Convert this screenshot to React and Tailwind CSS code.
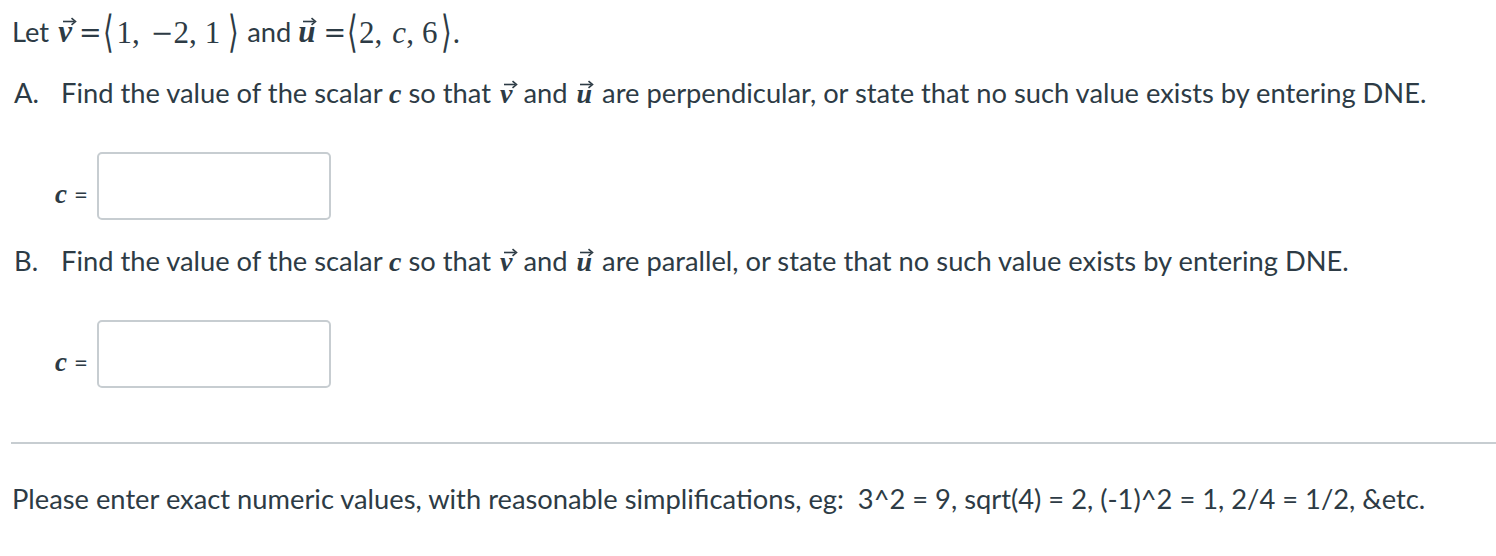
import React from "react";

function Vec({ ch, big }) {
  return (
    <span
      className={`relative inline-block leading-none font-bold italic font-['Liberation_Serif',serif] ${
        big ? "text-[31px]" : "text-[28px]"
      }`}
    >
      {ch}
      <svg
        className={`absolute ${big ? "left-[4px] top-[1px]" : "left-[3px] top-[0px]"}`}
        width="15"
        height="9"
        viewBox="0 0 15 9"
      >
        <path d="M1 4.5 H12.5" stroke="#2d3b45" strokeWidth="1.6" fill="none" />
        <path d="M9.5 1.2 L13.5 4.5 L9.5 7.8" stroke="#2d3b45" strokeWidth="1.6" fill="none" />
      </svg>
    </span>
  );
}

function Ang({ ch }) {
  return (
    <span className="inline-block scale-y-[1.45] scale-x-[0.9] text-[30px] leading-none font-['DejaVu_Sans',serif] font-extralight">
      {ch}
    </span>
  );
}

function C() {
  return <span className="font-bold italic text-[28px] font-['Liberation_Serif',serif]">c</span>;
}

function Answer({ top }) {
  return (
    <div className={`flex items-center pl-[55px] ${top}`}>
      <span className="flex items-center gap-[7px] mr-[9px] pt-[16px]">
        <span className="font-bold italic text-[27px] leading-none font-['Liberation_Serif',serif]">c</span>
        <span className="text-[24px] leading-none">=</span>
      </span>
      <div className="w-[234px] h-[68px] border-2 border-[#c7cdd1] rounded-[5px] bg-white" />
    </div>
  );
}

function Question({ letter, rel }) {
  return (
    <div className="flex items-center text-[27.3px] leading-[36px] h-[36px]">
      <span className="w-[61px] pl-[14px]">{letter}</span>
      <span className="whitespace-pre">
        Find the value of the scalar <C /> so that{" "}
        <span className="ml-[2px] mr-[4px]">
          <Vec ch="v" />
        </span>{" "}
        and{" "}
        <span className="ml-[2px] mr-[3px]">
          <Vec ch="u" />
        </span>{" "}
        are {rel}, or state that no such value exists by entering DNE.
      </span>
    </div>
  );
}

const M = "font-['Liberation_Serif',serif] text-[31px] leading-none";
const OP = "font-['DejaVu_Serif',serif] text-[27px] leading-none";

export default function App() {
  return (
    <div className="w-[1496px] h-[556px] bg-white text-[#2d3b45] overflow-hidden pt-[12px] font-['Lato',sans-serif]">
      <div className="pl-[12px] h-[40px] flex items-center whitespace-pre text-[27.3px]">
        <span>Let</span>
        <span className="ml-[9px]">
          <Vec ch="v" big />
        </span>
        <span className={`${OP} ml-[7px]`}>=</span>
        <Ang ch="⟨" />
        <span className={`${M} ml-[3px]`}>1,</span>
        <span className={`${OP} ml-[11px]`}>−</span>
        <span className={M}>2,</span>
        <span className={`${M} ml-[8px]`}>1</span>
        <span className="ml-[7px]">
          <Ang ch="⟩" />
        </span>
        <span className="ml-[8px]">and</span>
        <span className="ml-[7px]">
          <Vec ch="u" big />
        </span>
        <span className={`${OP} ml-[8px]`}>=</span>
        <Ang ch="⟨" />
        <span className={`${M} ml-[1px]`}>2,</span>
        <span className={`${M} italic ml-[10px]`}>c</span>
        <span className={M}>,</span>
        <span className={`${M} ml-[8px]`}>6</span>
        <span className="ml-[3px]">
          <Ang ch="⟩" />
        </span>
        <span className={M}>.</span>
      </div>

      <div className="mt-[23px]">
        <Question letter="A." rel="perpendicular" />
      </div>

      <Answer top="mt-[41px]" />

      <div className="mt-[23px]">
        <Question letter="B." rel="parallel" />
      </div>

      <Answer top="mt-[41px]" />

      <div className="ml-[11px] h-[2px] bg-[#c7cdd1] mt-[54px]" />

      <div className="pl-[12px] text-[27.3px] leading-[36px] mt-[37px] whitespace-pre">
        Please enter exact numeric values, with reasonable simplifications, eg:  3^2 = 9, sqrt(4) = 2, (-1)^2 = 1, 2/4 = 1/2, &etc.
      </div>
    </div>
  );
}
